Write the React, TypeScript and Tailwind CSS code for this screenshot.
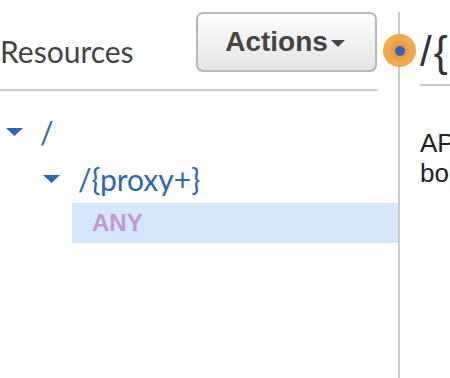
import React from 'react';

function Caret({ className }: { className: string }) {
  return (
    <svg width="17" height="8" viewBox="0 0 17 8" className={className}>
      <polygon points="0,0 17,0 8.5,8" fill="currentColor" />
    </svg>
  );
}

export default function App() {
  return (
    <div className="w-[450px] h-[378px] overflow-hidden bg-white pt-[12px]">
      <div className="relative flex h-full">
        {/* Resources tree */}
        <div className="w-[400px] shrink-0 border-r-2 border-[#cccccc]">
          <div className="mr-[20px] flex h-[79px] items-start justify-between border-b-2 border-[#cccccc]">
            <h2 className="mt-[19px] font-['Lato',sans-serif] text-[30px] leading-[40px] text-[#444444]">
              Resources
            </h2>
            <button className="mr-[1px] flex h-[60px] w-[181px] items-center justify-center gap-[3px] rounded-[7px] border-2 border-[#b8b8b8] bg-gradient-to-b from-[#fefefe] to-[#e4e4e4] pr-[3px] font-['Liberation_Sans',Arial,sans-serif] text-[28px] font-bold text-[#444444]">
              Actions
              <svg width="14" height="7" viewBox="0 0 14 7" className="mt-[2px] text-[#444444]">
                <polygon points="0,0 14,0 7,7" fill="currentColor" />
              </svg>
            </button>
          </div>

          <ul className="mt-[20px] font-['Lato',sans-serif] text-[#2f65b5]">
            <li className="flex h-[42px] items-center pl-[6px]">
              <Caret className="text-[#2f65b5]" />
              <span className="ml-[17px] text-[30px] leading-none">/</span>
            </li>
            <li className="mt-[5px] flex h-[42px] items-center pl-[43px]">
              <Caret className="text-[#2f65b5]" />
              <span className="ml-[18px] text-[30px] leading-none">/&#123;proxy+&#125;</span>
            </li>
            <li className="ml-[72px] mt-[3px] flex h-[40px] items-center bg-[#d5e7fc] pl-[20px]">
              <span className="font-['Liberation_Sans',Arial,sans-serif] text-[24px] font-bold text-[#c496d2]">
                ANY
              </span>
            </li>
          </ul>
        </div>

        {/* Status dot over the divider */}
        <div className="absolute left-[383px] top-[22px] flex h-[33px] w-[33px] items-center justify-center rounded-full bg-[#f1a94b]">
          <div className="flex h-[19px] w-[19px] items-center justify-center rounded-full bg-[#e69d44]">
            <div className="h-[10px] w-[10px] rounded-full bg-[#2f65c2]" />
          </div>
        </div>

        {/* Method execution panel */}
        <div className="w-[600px] shrink-0 pl-[20px]">
          <h1 className="mt-[16px] h-[58px] whitespace-nowrap border-b-2 border-[#cccccc] font-['Liberation_Sans',Arial,sans-serif] text-[42px] leading-[48px] tracking-[2px] text-[#333333]">
            /&#123;proxy+&#125; - ANY - Method Execution
          </h1>
          <p className="mt-[42px] whitespace-nowrap font-['Liberation_Sans',Arial,sans-serif] text-[26px] leading-[30px] text-[#222222]">
            API Gateway proxies the request to the integration
            <br />
            body, headers and query string parameters
          </p>
        </div>
      </div>
    </div>
  );
}
